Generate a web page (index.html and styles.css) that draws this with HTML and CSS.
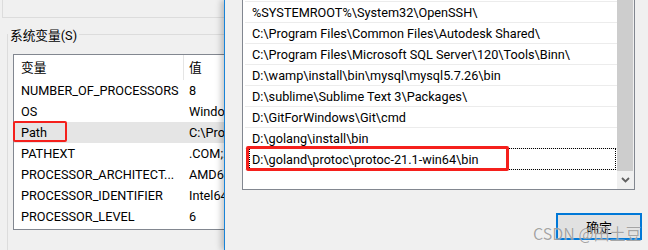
FILE: index.html
```html
<!DOCTYPE html>
<html lang="zh-CN">

<head>
    <title>编辑环境变量</title>
    <meta charset="utf-8">
    <link rel="stylesheet" href="styles.css">
</head>

<body>
    <div class="desk">
        <div class="env-window">
            <div class="user-group"></div>
            <div class="sys-group">
                <span class="group-label">系统变量(S)</span>
                <div class="var-list">
                    <div class="var-head">
                        <span class="col-name">变量</span>
                        <span class="col-value">值</span>
                    </div>
                    <div class="var-row"><span class="col-name">NUMBER_OF_PROCESSORS</span><span class="col-value">8</span></div>
                    <div class="var-row"><span class="col-name">OS</span><span class="col-value">Windows_NT</span></div>
                    <div class="var-row selected"><span class="col-name">Path</span><span class="col-value">C:\Program Files</span></div>
                    <div class="var-row"><span class="col-name">PATHEXT</span><span class="col-value">.COM;.EXE;.BAT</span></div>
                    <div class="var-row"><span class="col-name">PROCESSOR_ARCHITECT...</span><span class="col-value">AMD64</span></div>
                    <div class="var-row"><span class="col-name">PROCESSOR_IDENTIFIER</span><span class="col-value">Intel64 Family</span></div>
                    <div class="var-row"><span class="col-name">PROCESSOR_LEVEL</span><span class="col-value">6</span></div>
                </div>
            </div>
            <div class="mark mark-name"></div>
        </div>

        <div class="edit-dialog">
            <div class="path-list">
                <div class="path-items">
                    <div class="path-row">%SystemRoot%\System32\WindowsPowerShell\v1.0\</div>
                    <div class="path-row">%SYSTEMROOT%\System32\OpenSSH\</div>
                    <div class="path-row">C:\Program Files\Common Files\Autodesk Shared\</div>
                    <div class="path-row">C:\Program Files\Microsoft SQL Server\120\Tools\Binn\</div>
                    <div class="path-row">D:\wamp\install\bin\mysql\mysql5.7.26\bin</div>
                    <div class="path-row">D:\sublime\Sublime Text 3\Packages\</div>
                    <div class="path-row">D:\GitForWindows\Git\cmd</div>
                    <div class="path-row">D:\golang\install\bin</div>
                    <div class="path-row focused">D:\goland\protoc\protoc-21.1-win64\bin<span class="focus-ring"></span></div>
                </div>
                <div class="scrollbar">
                    <div class="thumb"></div>
                    <div class="arrow">
                        <svg width="9" height="6" viewBox="0 0 9 6">
                            <polyline points="1,1 4.5,4.5 8,1" fill="none" stroke="#606060" stroke-width="1.8"/>
                        </svg>
                    </div>
                </div>
            </div>
            <div class="dialog-foot">
                <button class="ok-button">确定</button>
            </div>
            <div class="mark mark-path"></div>
        </div>

        <div class="watermark">CSDN @田土豆</div>
    </div>
</body>

</html>
```

FILE: styles.css
```css
body {
    margin: 0;
    padding: 0;
    overflow: hidden;
    background-color: #f0f0f0;
    font-family: "Roboto", "Noto Sans CJK SC", sans-serif;
    font-size: 12.7px;
    color: #000;
}

.desk {
    position: relative;
    width: 648px;
    height: 250px;
    overflow: hidden;
}

/* left window: 环境变量 */
.env-window {
    position: absolute;
    left: 0;
    top: 0;
    width: 260px;
    height: 250px;
    display: flex;
    flex-direction: column;
}

.user-group {
    height: 17px;
    margin-left: 2px;
    border-left: 1px solid #dcdcdc;
    border-bottom: 1px solid #dcdcdc;
}

.sys-group {
    position: relative;
    flex: 1;
    margin-top: 16px;
    margin-left: 7px;
    padding: 19px 0 0 5px;
    border-top: 1px solid #dcdcdc;
    border-left: 1px solid #dcdcdc;
}

.group-label {
    position: absolute;
    left: 0;
    top: -8px;
    padding: 0 2px 0 2px;
    line-height: 17px;
    background-color: #f0f0f0;
}

.var-list {
    width: 260px;
    height: 174px;
    border: 1px solid #828790;
    background-color: #fff;
    overflow: hidden;
}

.var-head, .var-row {
    display: flex;
    white-space: nowrap;
}

.var-head {
    height: 25px;
    line-height: 26px;
}

.var-row {
    height: 21px;
    line-height: 21px;
}

.col-name {
    flex-shrink: 0;
    width: 162px;
    padding-left: 7px;
    overflow: hidden;
}

.var-head .col-name {
    border-right: 1px solid #e5e5e5;
}

.var-row .col-name {
    margin-right: 1px;
}

.col-value {
    flex-shrink: 0;
    padding-left: 5px;
}

.selected {
    background-color: #e5e5e5;
}

/* red annotation boxes */
.mark {
    position: absolute;
    border: 2px solid #f5201c;
    border-radius: 2px;
    box-sizing: border-box;
}

.mark-name {
    left: 13px;
    top: 121px;
    width: 54px;
    height: 21px;
}

/* right dialog: 编辑环境变量 */
.edit-dialog {
    position: absolute;
    left: 224px;
    top: 0;
    width: 423px;
    height: 250px;
    border-left: 1px solid #1883d7;
    background-color: #f0f0f0;
    box-shadow: -3px 0 6px rgba(0, 0, 0, 0.22);
    display: flex;
    flex-direction: column;
}

.path-list {
    display: flex;
    width: 391px;
    height: 208px;
    margin: -20px 0 0 17px;
    border: 1px solid #828790;
    background-color: #fff;
}

.path-items {
    flex: 1;
}

.path-row {
    position: relative;
    height: 20px;
    line-height: 22px;
    margin-left: 2px;
    padding-left: 7px;
    border-bottom: 1px solid #ececec;
    white-space: nowrap;
}

.focus-ring {
    position: absolute;
    left: 4px;
    right: 1px;
    top: -1px;
    bottom: -1px;
    border: 1px dotted #000;
}

.scrollbar {
    width: 17px;
    display: flex;
    flex-direction: column;
    background-color: #f0f0f0;
}

.thumb {
    height: 190px;
    margin-right: 1px;
    background-color: #cdcdcd;
}

.arrow {
    flex: 1;
    display: flex;
    align-items: center;
    justify-content: center;
}

.dialog-foot {
    display: flex;
    justify-content: flex-end;
    margin-top: 23px;
    padding-right: 6px;
}

.ok-button {
    width: 86px;
    height: 27px;
    padding: 0;
    border: 2px solid #0078d7;
    background-color: #e1e1e1;
    font-family: "Noto Sans CJK SC", sans-serif;
    font-size: 13px;
    color: #000;
}

.mark-path {
    left: 21px;
    top: 146px;
    width: 263px;
    height: 25px;
    border-width: 3px;
}

.watermark {
    position: absolute;
    left: 533px;
    top: 223px;
    font-family: "Noto Sans CJK SC", sans-serif;
    font-size: 16px;
    line-height: 20px;
    color: rgba(90, 90, 90, 0.55);
    text-shadow: 0 0 1px #fff;
    white-space: nowrap;
}
```
